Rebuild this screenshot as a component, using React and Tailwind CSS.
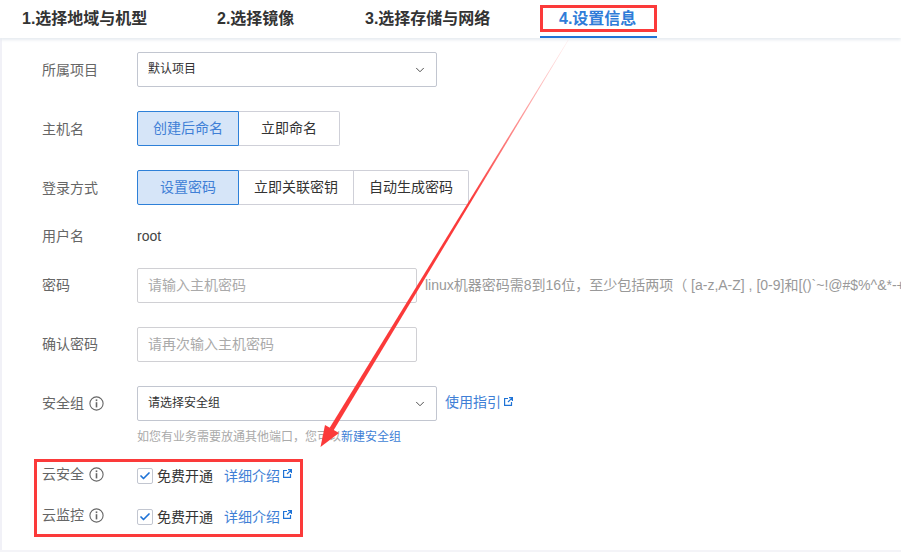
import React from "react";
import { ChevronDown, Check } from "lucide-react";

const font = { fontFamily: '"Liberation Sans", "Noto Sans CJK SC", sans-serif' };

function Ext() {
  return (
    <svg width="9" height="9" viewBox="0 0 9 9" fill="none" stroke="#1f73d6" strokeWidth="1.2" className="ml-[3px] mb-[5px] shrink-0">
      <path d="M4 1.5H.6v6.9h6.9V5M5 .6h3.4V4M8.4 .6 4 5" />
    </svg>
  );
}

function Info() {
  return (
    <svg width="15" height="15" viewBox="0 0 15 15" fill="none" className="ml-[5px] shrink-0">
      <circle cx="7.5" cy="7.5" r="6.6" stroke="#666" strokeWidth="1.1" />
      <rect x="6.7" y="3.4" width="1.6" height="1.7" fill="#666" />
      <rect x="6.7" y="6.2" width="1.6" height="5.2" fill="#666" />
    </svg>
  );
}

function Row({ label, info, mt, children, h = "h-[35px]", labelClass = "" }) {
  return (
    <div className={`flex items-center ${h} ${mt}`}>
      <div className={`w-[95px] shrink-0 flex items-center text-[14px] text-[#666] ${labelClass}`}>
        {label}
        {info && <Info />}
      </div>
      {children}
    </div>
  );
}

function Seg({ items }) {
  return (
    <div className="flex h-[35px] text-[14px]">
      {items.map((it, i) => (
        <div
          key={it.t}
          className={`flex items-center justify-center border ${it.w} ${
            i === 0
              ? "bg-[#d6e5f8] border-[#2e80d8] text-[#3f7fd6] rounded-l-[2px]"
              : "border-[#cfd0d8] border-l-0 text-[#333]"
          } ${i === items.length - 1 ? "rounded-r-[2px]" : ""}`}
        >
          {it.t}
        </div>
      ))}
    </div>
  );
}

function Select({ text }) {
  return (
    <div className="w-[300px] h-[35px] border border-[#c2c6d0] rounded-[2px] flex items-center justify-between pl-[10px] pr-[9px] text-[12px] text-[#333] bg-white shrink-0">
      <span className="mb-[2px]">{text}</span>
      <ChevronDown size={14} strokeWidth={1.6} color="#444" />
    </div>
  );
}

function Input({ ph }) {
  return (
    <div className="w-[280px] h-[35px] border border-[#d0d0d4] rounded-[2px] flex items-center pl-[10px] text-[14px] text-[#aaa] bg-white shrink-0">
      {ph}
    </div>
  );
}

function Free() {
  return (
    <div className="flex items-center text-[14px]">
      <span className="w-[16px] h-[16px] border border-[#c2c6d0] rounded-[2px] flex items-center justify-center bg-white">
        <Check size={12} strokeWidth={3.4} color="#1f73d6" />
      </span>
      <span className="ml-[4px] text-[14px] text-[#333]">免费开通</span>
      <span className="ml-[11px] text-[14px] text-[#3f7fd6]">详细介绍</span>
      <Ext />
    </div>
  );
}

export default function App() {
  return (
    <div className="relative w-[901px] h-[552px] overflow-hidden bg-white" style={font}>
      <header className="h-[38px] flex items-start text-[16px] font-bold text-[#333] shadow-[0_2px_3px_#e6ebf0] relative">
        <div className="ml-[22px] mt-[7px] w-[195px]">1.选择地域与机型</div>
        <div className="mt-[7px] w-[148px]">2.选择镜像</div>
        <div className="mt-[7px] w-[175px]">3.选择存储与网络</div>
        <div className="w-[117px] h-[38px] border-b-2 border-[#1f73d6] pt-[7px] pl-[19px] text-[#2f7cd8]">4.设置信息</div>
      </header>

      <main className="border-l-2 border-[#f1f1f7] pl-[40px] h-[512px] flex flex-col">
        <Row label="所属项目" mt="mt-[14px]" labelClass="pt-[2px]"><Select text="默认项目" /></Row>
        <Row label="主机名" mt="mt-[24px]" labelClass="pt-[2px]">
          <Seg items={[{ t: "创建后命名", w: "w-[102px]" }, { t: "立即命名", w: "w-[101px]" }]} />
        </Row>
        <Row label="登录方式" mt="mt-[24px]" labelClass="pt-[2px]">
          <Seg items={[{ t: "设置密码", w: "w-[102px]" }, { t: "立即关联密钥", w: "w-[115px]" }, { t: "自动生成密码", w: "w-[115px]" }]} />
        </Row>
        <Row label="用户名" mt="mt-[20px]" h="h-[22px]">
          <span className="text-[14px] text-[#444]">root</span>
        </Row>
        <Row label="密码" mt="mt-[21px]">
          <Input ph="请输入主机密码" />
          <span className="ml-[8px] whitespace-nowrap text-[14px] text-[#999]">
            linux机器密码需8到16位，至少包括两项（ [a-z,A-Z] , [0-9]和[()`~!@#$%^&*-+=
          </span>
        </Row>
        <Row label="确认密码" mt="mt-[24px]"><Input ph="请再次输入主机密码" /></Row>
        <Row label="安全组" info mt="mt-[24px]">
          <Select text="请选择安全组" />
          <span className="ml-[8px] text-[14px] text-[#3f7fd6] mb-[2px]">使用指引</span>
          <Ext />
        </Row>
        <div className="ml-[95px] mt-[7px] h-[18px] flex items-center text-[12px] text-[#aaa]">
          如您有业务需要放通其他端口，您可以<span className="text-[#3f7fd6]">新建安全组</span>
        </div>
        <Row label="云安全" info mt="mt-[18px]" h="h-[24px]" labelClass="pb-[4px]"><Free /></Row>
        <Row label="云监控" info mt="mt-[17px]" h="h-[24px]" labelClass="pb-[4px]"><Free /></Row>
      </main>
      <div className="h-[2px] bg-[#f4f4f8]" />

      <div className="absolute left-[540px] top-[5px] w-[117px] h-[27px] border-[3px] border-[#fb3a3a]" />
      <div className="absolute left-[34px] top-[459px] w-[269px] h-[78px] border-[3px] border-[#fb3a3a]" />
      <svg className="absolute left-0 top-0 pointer-events-none" width="901" height="552" viewBox="0 0 901 552">
        <defs>
          <linearGradient id="fade" x1="568" y1="40" x2="470" y2="200" gradientUnits="userSpaceOnUse">
            <stop offset="0" stopColor="#fb3a3a" stopOpacity="0.1" />
            <stop offset="1" stopColor="#fb3a3a" />
          </linearGradient>
        </defs>
        <polygon fill="url(#fade)" points="568.5,40 568,40 329.5,428 333.5,430.5" />
        <polygon fill="#fb3a3a" points="320.5,447 325,425 339,433" />
      </svg>
    </div>
  );
}
